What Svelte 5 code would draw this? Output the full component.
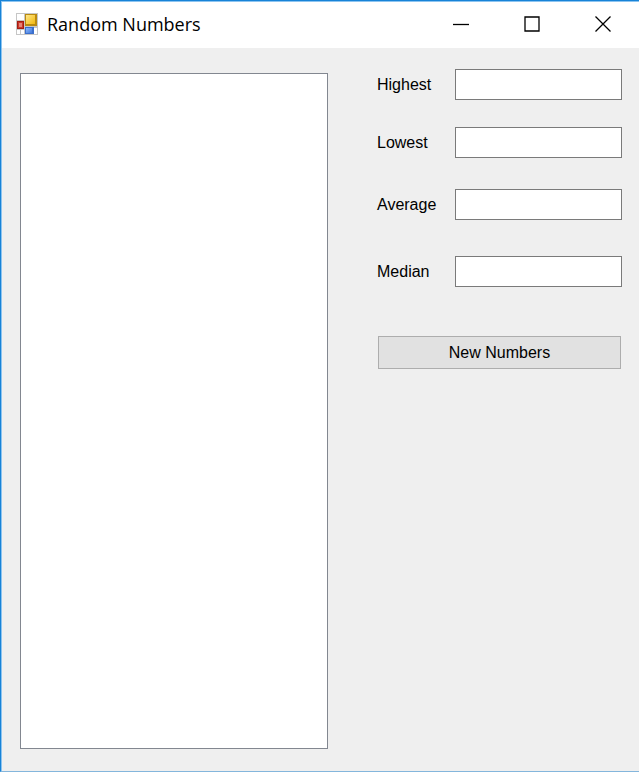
<script>
  let numbers = $state([]);

  let sorted = $derived([...numbers].sort((a, b) => a - b));
  let highest = $derived(sorted.length ? sorted[sorted.length - 1] : '');
  let lowest = $derived(sorted.length ? sorted[0] : '');
  let average = $derived(
    sorted.length ? (sorted.reduce((sum, n) => sum + n, 0) / sorted.length).toFixed(2) : ''
  );
  let median = $derived(getMedian(sorted));

  function getMedian(list) {
    if (!list.length) return '';
    const mid = Math.floor(list.length / 2);
    return list.length % 2 ? list[mid] : (list[mid - 1] + list[mid]) / 2;
  }

  function newNumbers() {
    numbers = Array.from({ length: 25 }, () => Math.floor(Math.random() * 100) + 1);
  }
</script>

<main class="window">
  <header class="title-bar">
    <!-- Default form icon -->
    <svg class="app-icon" width="22" height="22" viewBox="0 0 22 22" aria-hidden="true">
      <defs>
        <linearGradient id="gold" x1="0" y1="0" x2="1" y2="1">
          <stop offset="0" stop-color="#ffe78a" />
          <stop offset="1" stop-color="#f2b80c" />
        </linearGradient>
        <linearGradient id="blue" x1="0" y1="0" x2="1" y2="1">
          <stop offset="0" stop-color="#8fb9fb" />
          <stop offset="1" stop-color="#3f78dc" />
        </linearGradient>
      </defs>
      <rect width="22" height="22" fill="#c6c6c6" />
      <rect x="1" y="1" width="7" height="6" fill="#fff" />
      <rect x="1" y="17" width="3" height="4" fill="#fff" />
      <rect x="5" y="17" width="3" height="4" fill="#fff" />
      <rect x="18" y="15" width="3" height="6" fill="#fff" />
      <rect x="1" y="8" width="7" height="8" fill="#a51c12" />
      <rect x="2" y="9" width="5" height="6" fill="#c9392b" />
      <rect x="3" y="10" width="3" height="4" fill="#e88377" />
      <rect x="9" y="1" width="12" height="12" fill="#b98a10" />
      <rect x="10" y="2" width="9" height="9" fill="url(#gold)" />
      <rect x="9" y="14" width="9" height="7" fill="#3b6fcb" />
      <rect x="10" y="15" width="6" height="5" fill="url(#blue)" />
    </svg>
    <h1 class="title">Random Numbers</h1>

    <div class="window-buttons">
      <button type="button" class="window-btn" aria-label="Minimize">
        <svg width="16" height="16" viewBox="0 0 16 16"><path d="M0 8.5H16" /></svg>
      </button>
      <button type="button" class="window-btn" aria-label="Maximize">
        <svg width="16" height="16" viewBox="0 0 16 16"><path d="M1 1H15V15H1Z" /></svg>
      </button>
      <button type="button" class="window-btn" aria-label="Close">
        <svg width="16" height="16" viewBox="0 0 16 16"><path d="M.5 .5L15.5 15.5M15.5 .5L.5 15.5" /></svg>
      </button>
    </div>
  </header>

  <div class="content">
    <select class="number-list" size="20" aria-label="Numbers">
      {#each numbers as n}
        <option>{n}</option>
      {/each}
    </select>

    <div class="results">
      <div class="field">
        <label for="highest">Highest</label>
        <input id="highest" type="text" value={highest} />
      </div>
      <div class="field">
        <label for="lowest">Lowest</label>
        <input id="lowest" type="text" value={lowest} />
      </div>
      <div class="field">
        <label for="average">Average</label>
        <input id="average" type="text" value={average} />
      </div>
      <div class="field">
        <label for="median">Median</label>
        <input id="median" type="text" value={median} />
      </div>
      <button type="button" class="btn-new" onclick={newNumbers}>New Numbers</button>
    </div>
  </div>
</main>

<style>
  :global(body) {
    margin: 0;
  }

  .window {
    display: flex;
    flex-direction: column;
    box-sizing: border-box;
    min-height: 100vh;
    border-top: 1px solid #1883d7;
    border-left: 1px solid #1883d7;
    border-bottom: 1px solid #84b6dc;
    background: #efefef;
    box-shadow: inset 1px 1px #8cc4f0;
    color: #000;
    font-family: "Liberation Sans", Arial, sans-serif;
    font-size: 16px;
  }

  .title-bar {
    display: flex;
    align-items: center;
    box-sizing: border-box;
    height: 46px;
    margin: 1px 0 0 1px;
    padding: 0 1px 2px 14px;
    background: #fff;
  }
  .app-icon { flex: none; }
  .title {
    margin: 0 0 0 9px;
    font-family: "Segoe UI", "Open Sans", sans-serif;
    font-size: 18px;
    font-weight: 400;
    line-height: 24px;
    white-space: nowrap;
  }

  .window-buttons {
    display: flex;
    align-self: stretch;
    margin-left: auto;
  }
  .window-btn {
    display: flex;
    align-items: center;
    justify-content: center;
    width: 71px;
    padding: 0;
    border: none;
    background: transparent;
  }
  .window-btn:hover { background: #e5e5e5; }
  .window-btn path {
    fill: none;
    stroke: #000;
    stroke-width: 1.3;
  }

  .content {
    display: flex;
    flex: 1;
    gap: 49px;
    padding: 21px 17px 22px 19px;
  }

  .number-list {
    flex: 1;
    min-width: 0;
    margin-top: 4px;
    padding: 2px;
    border: 1px solid #828790;
    border-radius: 0;
    background: #fff;
    font: inherit;
    outline: none;
  }

  .results {
    display: flex;
    flex-direction: column;
    width: 245px;
  }
  .field {
    display: flex;
    align-items: center;
    margin-bottom: 31px;
  }
  .field:first-child { margin-bottom: 27px; }
  .field:nth-child(3) { margin-bottom: 36px; }
  .field:nth-child(4) { margin-bottom: 49px; }
  .field label { width: 78px; }
  .field input {
    box-sizing: border-box;
    flex: 1;
    min-width: 0;
    height: 31px;
    padding: 2px 4px;
    border: 1px solid #7a7a7a;
    border-radius: 0;
    background: #fff;
    font: inherit;
  }
  .field input:focus {
    border-color: #0078d7;
    outline: none;
  }

  .btn-new {
    height: 33px;
    margin: 0 1px;
    border: 1px solid #adadad;
    background: #e1e1e1;
    color: #000;
    font: inherit;
  }
  .btn-new:hover {
    border-color: #0078d7;
    background: #e5f1fb;
  }
</style>
